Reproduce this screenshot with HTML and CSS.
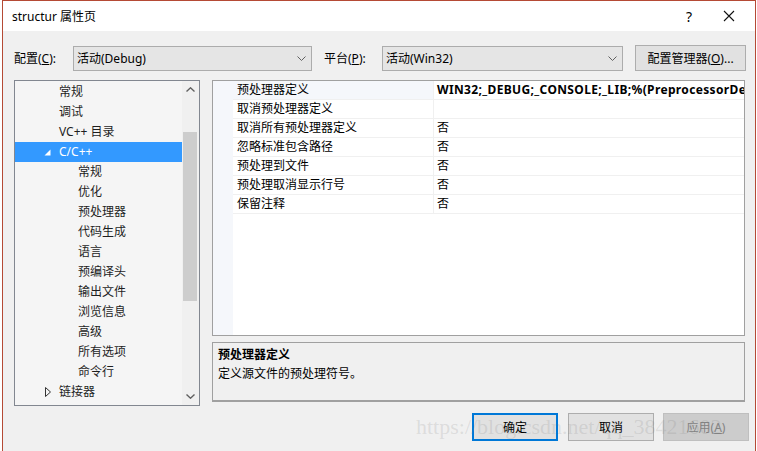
FILE: index.html
```html
<!DOCTYPE html>
<html lang="zh-CN">
<head>
    <meta charset="UTF-8">
    <title>structur 属性页</title>
    <link rel="stylesheet" href="styles.css">
</head>
<body>
    <div class="window">
        <div class="titlebar">
            <span class="title">structur 属性页</span>
            <span class="help">?</span>
            <span class="close">
                <svg width="12" height="12" viewBox="0 0 12 12"><path d="M1 1 L11 11 M11 1 L1 11" stroke="#111" stroke-width="1.1" fill="none"/></svg>
            </span>
        </div>
        <div class="content">
            <div class="config-row">
                <span class="field-label">配置(<u>C</u>):</span>
                <div class="combo combo-config">
                    <span>活动(Debug)</span>
                    <svg class="chevron" width="9" height="5" viewBox="0 0 9 5"><path d="M0.5 0.5 L4.5 4.5 L8.5 0.5" stroke="#606060" fill="none"/></svg>
                </div>
                <span class="field-label platform-label">平台(<u>P</u>):</span>
                <div class="combo combo-platform">
                    <span>活动(Win32)</span>
                    <svg class="chevron" width="9" height="5" viewBox="0 0 9 5"><path d="M0.5 0.5 L4.5 4.5 L8.5 0.5" stroke="#606060" fill="none"/></svg>
                </div>
                <button class="btn btn-manager">配置管理器(<u>O</u>)...</button>
            </div>

            <div class="main">
                <div class="tree">
                    <ul class="tree-list">
                        <li class="lvl1">常规</li>
                        <li class="lvl1">调试</li>
                        <li class="lvl1">VC++ 目录</li>
                        <li class="lvl1 selected">
                            <svg class="expander" width="7" height="7" viewBox="0 0 7 7"><path d="M6.5 0.5 L6.5 6.5 L0.5 6.5 Z" fill="#fff"/></svg>
                            C/C++
                        </li>
                        <li class="lvl2">常规</li>
                        <li class="lvl2">优化</li>
                        <li class="lvl2">预处理器</li>
                        <li class="lvl2">代码生成</li>
                        <li class="lvl2">语言</li>
                        <li class="lvl2">预编译头</li>
                        <li class="lvl2">输出文件</li>
                        <li class="lvl2">浏览信息</li>
                        <li class="lvl2">高级</li>
                        <li class="lvl2">所有选项</li>
                        <li class="lvl2">命令行</li>
                        <li class="lvl1">
                            <svg class="expander collapsed" width="6" height="10" viewBox="0 0 6 10"><path d="M0.5 0.5 L5.5 5 L0.5 9.5 Z" fill="none" stroke="#333"/></svg>
                            链接器
                        </li>
                    </ul>
                    <div class="scrollbar">
                        <div class="scroll-btn">
                            <svg width="9" height="5" viewBox="0 0 9 5"><path d="M0.5 4.5 L4.5 0.8 L8.5 4.5" stroke="#606060" stroke-width="1.4" fill="none"/></svg>
                        </div>
                        <div class="track"><div class="thumb"></div></div>
                        <div class="scroll-btn">
                            <svg width="9" height="5" viewBox="0 0 9 5"><path d="M0.5 0.5 L4.5 4.2 L8.5 0.5" stroke="#606060" stroke-width="1.4" fill="none"/></svg>
                        </div>
                    </div>
                </div>

                <div class="right">
                    <div class="grid">
                        <div class="row current">
                            <div class="gutter"></div>
                            <div class="name">预处理器定义</div>
                            <div class="value bold">WIN32;_DEBUG;_CONSOLE;_LIB;%(PreprocessorDefinitions)</div>
                        </div>
                        <div class="row">
                            <div class="gutter"></div>
                            <div class="name">取消预处理器定义</div>
                            <div class="value"></div>
                        </div>
                        <div class="row">
                            <div class="gutter"></div>
                            <div class="name">取消所有预处理器定义</div>
                            <div class="value">否</div>
                        </div>
                        <div class="row">
                            <div class="gutter"></div>
                            <div class="name">忽略标准包含路径</div>
                            <div class="value">否</div>
                        </div>
                        <div class="row">
                            <div class="gutter"></div>
                            <div class="name">预处理到文件</div>
                            <div class="value">否</div>
                        </div>
                        <div class="row">
                            <div class="gutter"></div>
                            <div class="name">预处理取消显示行号</div>
                            <div class="value">否</div>
                        </div>
                        <div class="row">
                            <div class="gutter"></div>
                            <div class="name">保留注释</div>
                            <div class="value">否</div>
                        </div>
                        <div class="grid-rest">
                            <div class="gutter"></div>
                        </div>
                    </div>
                    <div class="desc">
                        <div class="desc-title">预处理器定义</div>
                        <div class="desc-text">定义源文件的预处理符号。</div>
                    </div>
                </div>
            </div>

            <div class="buttons">
                <button class="btn btn-ok">确定</button>
                <button class="btn">取消</button>
                <button class="btn btn-disabled">应用(<u>A</u>)</button>
            </div>
        </div>
        <div class="watermark">https://blog.csdn.net/qq_38421602</div>
    </div>
</body>
</html>
```

FILE: styles.css
```css
body {
    margin: 0;
    padding: 0;
    background-color: #ffffff;
    font-family: "Noto Sans", "Noto Sans CJK SC", sans-serif;
    font-size: 12px;
    color: #000;
}
.window {
    position: relative;
    margin-left: 2px;
    width: 754px;
    height: 451px;
    box-sizing: border-box;
    border: 1px solid #b54a35;
    border-bottom: none;
    background-color: #f0f0f0;
    overflow: hidden;
}
.titlebar {
    height: 30px;
    background-color: #ffffff;
    display: flex;
    align-items: center;
    padding-left: 9px;
}
.title {
    flex: 1;
    font-size: 12px;
}
.help {
    font-size: 14px;
    width: 24px;
    margin-right: 13px;
}
.close {
    width: 30px;
    display: flex;
    margin-right: 2px;
}
.content {
    padding: 14px 0 0 11px;
}
.config-row {
    display: flex;
    align-items: center;
    height: 26px;
}
.field-label {
    width: 59px;
    white-space: nowrap;
}
.platform-label {
    margin-left: 12px;
    width: 58px;
}
.combo {
    height: 25px;
    box-sizing: border-box;
    background-color: #e5e5e5;
    border: 1px solid #acacac;
    display: flex;
    align-items: center;
    justify-content: space-between;
    padding: 0 5px 0 3px;
}
.combo-config {
    width: 239px;
}
.combo-platform {
    width: 241px;
}
.btn {
    font-family: "Noto Sans", "Noto Sans CJK SC", sans-serif;
    font-size: 12px;
    color: #000;
    background-color: #e1e1e1;
    border: 1px solid #adadad;
    width: 86px;
    height: 28px;
    padding: 0;
    margin: 0;
}
.btn-manager {
    width: 111px;
    height: 26px;
    margin-left: 12px;
}
.main {
    display: flex;
    align-items: flex-start;
    margin-top: 9px;
}
.tree {
    width: 186px;
    height: 326px;
    box-sizing: border-box;
    border: 1px solid #828790;
    background-color: #f5f5f5;
    display: flex;
    overflow: hidden;
}
.tree-list {
    list-style: none;
    margin: 0;
    padding: 1px 0 0 0;
    width: 167px;
}
.tree-list li {
    height: 20px;
    line-height: 20px;
    position: relative;
    white-space: nowrap;
    color: #1e1e1e;
}
.tree-list .lvl1 {
    padding-left: 44px;
}
.tree-list .lvl2 {
    padding-left: 63px;
}
.tree-list .selected {
    background-color: #3399ff;
    color: #ffffff;
}
.expander {
    position: absolute;
    left: 29px;
    top: 7px;
}
.expander.collapsed {
    left: 30px;
    top: 5px;
}
.scrollbar {
    width: 17px;
    display: flex;
    flex-direction: column;
    background-color: #f0f0f0;
}
.scroll-btn {
    height: 17px;
    display: flex;
    align-items: center;
    justify-content: center;
}
.track {
    flex: 1;
    padding-top: 34px;
}
.thumb {
    margin-left: 1px;
    width: 14px;
    height: 169px;
    background-color: #cdcdcd;
}
.right {
    margin-left: 12px;
    width: 533px;
    display: flex;
    flex-direction: column;
}
.grid {
    height: 256px;
    box-sizing: border-box;
    border: 1px solid #a0a0a0;
    background-color: #ffffff;
    display: flex;
    flex-direction: column;
    overflow: hidden;
}
.row {
    display: flex;
    height: 19px;
    line-height: 18px;
    flex-shrink: 0;
}
.gutter {
    width: 20px;
    flex-shrink: 0;
    background-color: #f5f7fb;
}
.name {
    width: 196px;
    flex-shrink: 0;
    padding-left: 4px;
    border-bottom: 1px solid #f0f0f0;
    border-right: 1px solid #f0f0f0;
    white-space: nowrap;
}
.row.current .name {
    background-color: #f5f7fb;
}
.value {
    flex: 1;
    padding-left: 3px;
    border-bottom: 1px solid #f0f0f0;
    white-space: nowrap;
    overflow: hidden;
}
.value.bold {
    font-weight: bold;
    letter-spacing: 0.35px;
}
.grid-rest {
    flex: 1;
    display: flex;
}
.desc {
    margin-top: 6px;
    height: 60px;
    box-sizing: border-box;
    border: 1px solid #a0a0a0;
    border-bottom-width: 2px;
    padding: 2px 5px;
    line-height: 19px;
}
.desc-title {
    font-weight: bold;
}
.buttons {
    display: flex;
    justify-content: flex-end;
    gap: 9px;
    margin-top: 7px;
    padding-right: 6px;
}
.btn-ok {
    border: 2px solid #0078d7;
    margin-right: 1px;
}
.btn-disabled {
    background-color: #cccccc;
    border-color: #bfbfbf;
    color: #838383;
}
.watermark {
    position: absolute;
    left: 413px;
    top: 413px;
    font-family: "Liberation Serif", serif;
    font-size: 22px;
    color: rgba(120, 120, 120, 0.18);
    white-space: nowrap;
    pointer-events: none;
}
```
